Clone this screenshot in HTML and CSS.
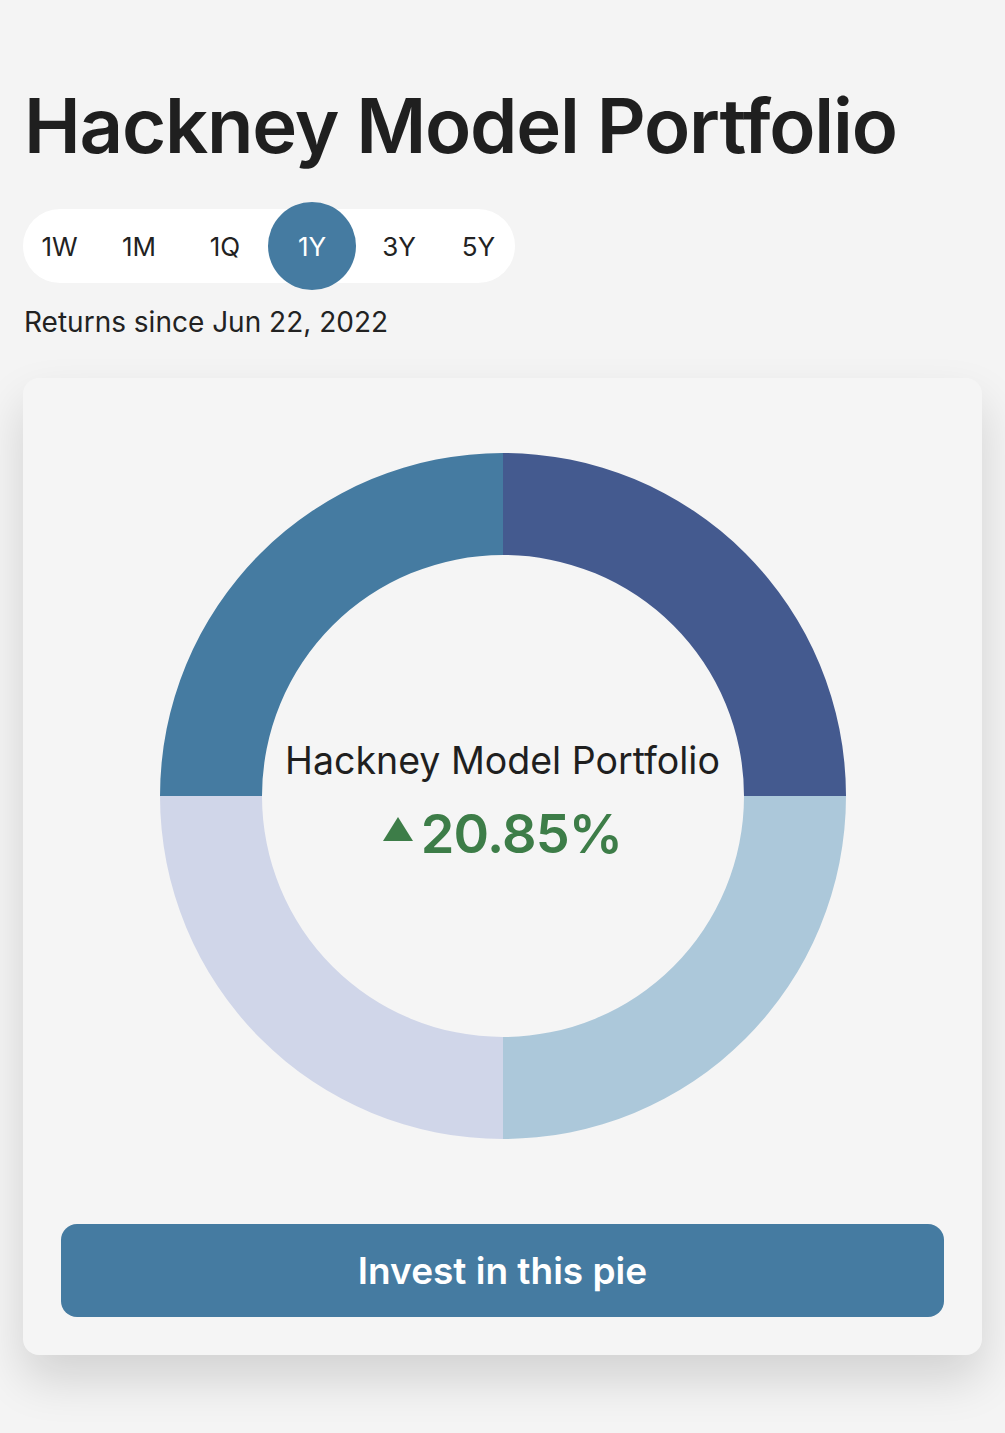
FILE: index.html
```html
<!DOCTYPE html>
<html lang="en">
<head>
<meta charset="utf-8">
<title>Hackney Model Portfolio</title>
<link rel="stylesheet" href="styles.css">
</head>
<body>
<main class="page">
  <h1 class="title">Hackney Model Portfolio</h1>
  <div class="periods">
    <button class="period edge">1W</button>
    <button class="period">1M</button>
    <button class="period">1Q</button>
    <button class="period active">1Y</button>
    <button class="period">3Y</button>
    <button class="period edge">5Y</button>
  </div>
  <p class="since">Returns since Jun 22, 2022</p>
  <section class="card">
    <div class="donut">
      <svg class="ring" width="686" height="686" viewBox="0 0 686 686">
        <path fill="#445a8f" d="M343 0 A343 343 0 0 1 686 343 L584 343 A241 241 0 0 0 343 102 Z"/>
        <path fill="#acc8da" d="M686 343 A343 343 0 0 1 343 686 L343 584 A241 241 0 0 0 584 343 Z"/>
        <path fill="#d0d6e9" d="M343 686 A343 343 0 0 1 0 343 L102 343 A241 241 0 0 0 343 584 Z"/>
        <path fill="#457ba1" d="M0 343 A343 343 0 0 1 343 0 L343 102 A241 241 0 0 0 102 343 Z"/>
      </svg>
      <div class="center">
        <div class="center-name">Hackney Model Portfolio</div>
        <div class="center-return">
          <svg class="up" width="30" height="24" viewBox="0 0 30 24"><path d="M15 0 L30 24 L0 24 Z" fill="#3d7d48"/></svg>
          <span>20.85%</span>
        </div>
      </div>
    </div>
    <button class="invest">Invest in this pie</button>
  </section>
</main>
</body>
</html>
```
FILE: styles.css
```css
* { box-sizing: border-box; }
html, body {
  margin: 0;
  background: #f4f4f4;
}
body {
  font-family: Inter, "Noto Sans", sans-serif;
  color: #1f1f1f;
  font-variant-ligatures: none;
  font-feature-settings: "liga" 0, "calt" 0;
}
.page {
  padding: 70px 23px 80px 23px;
}
.title {
  margin: 0 0 0 1px;
  font-size: 76px;
  font-weight: 600;
  line-height: 110px;
  letter-spacing: -1.2px;
  color: #1f1f1f;
}
.periods {
  margin-top: 29px;
  display: inline-flex;
  align-items: center;
  height: 74px;
  background: #ffffff;
  border-radius: 37px;
}
.period {
  border: 0;
  background: transparent;
  font-family: inherit;
  font-feature-settings: inherit;
  font-size: 26px;
  color: #222;
  width: 86px;
  height: 88px;
  padding: 0;
  border-radius: 50%;
  flex: none;
}
.period.edge { width: 73px; }
.period.active {
  background: #457ba1;
  color: #ffffff;
  width: 88px;
}
.since {
  margin: 19px 0 0 1px;
  font-size: 28px;
  line-height: 40px;
  color: #222;
}
.card {
  margin-top: 36px;
  background: #f5f5f5;
  border-radius: 16px;
  padding: 75px 38px 38px 38px;
  box-shadow: 0 24px 48px rgba(0, 0, 0, 0.14);
  display: flex;
  flex-direction: column;
  align-items: center;
}
.donut {
  position: relative;
  width: 686px;
  height: 686px;
}
.ring { display: block; }
.center {
  position: absolute;
  inset: 0;
  display: flex;
  flex-direction: column;
  align-items: center;
  justify-content: center;
  padding-top: 13px;
}
.center-name {
  font-size: 37.5px;
  line-height: 44px;
  color: #1f1f1f;
}
.center-return {
  margin-top: 19px;
  display: flex;
  align-items: center;
  gap: 8px;
  color: #3d7d48;
  font-size: 54px;
  font-weight: 600;
  line-height: 64px;
  letter-spacing: -0.8px;
}
.up { margin-top: -10px; }
.invest {
  margin-top: 85px;
  width: 100%;
  height: 93px;
  border: 0;
  border-radius: 16px;
  background: #457ba1;
  color: #ffffff;
  font-family: inherit;
  font-feature-settings: inherit;
  font-size: 37px;
  font-weight: 600;
}
```
